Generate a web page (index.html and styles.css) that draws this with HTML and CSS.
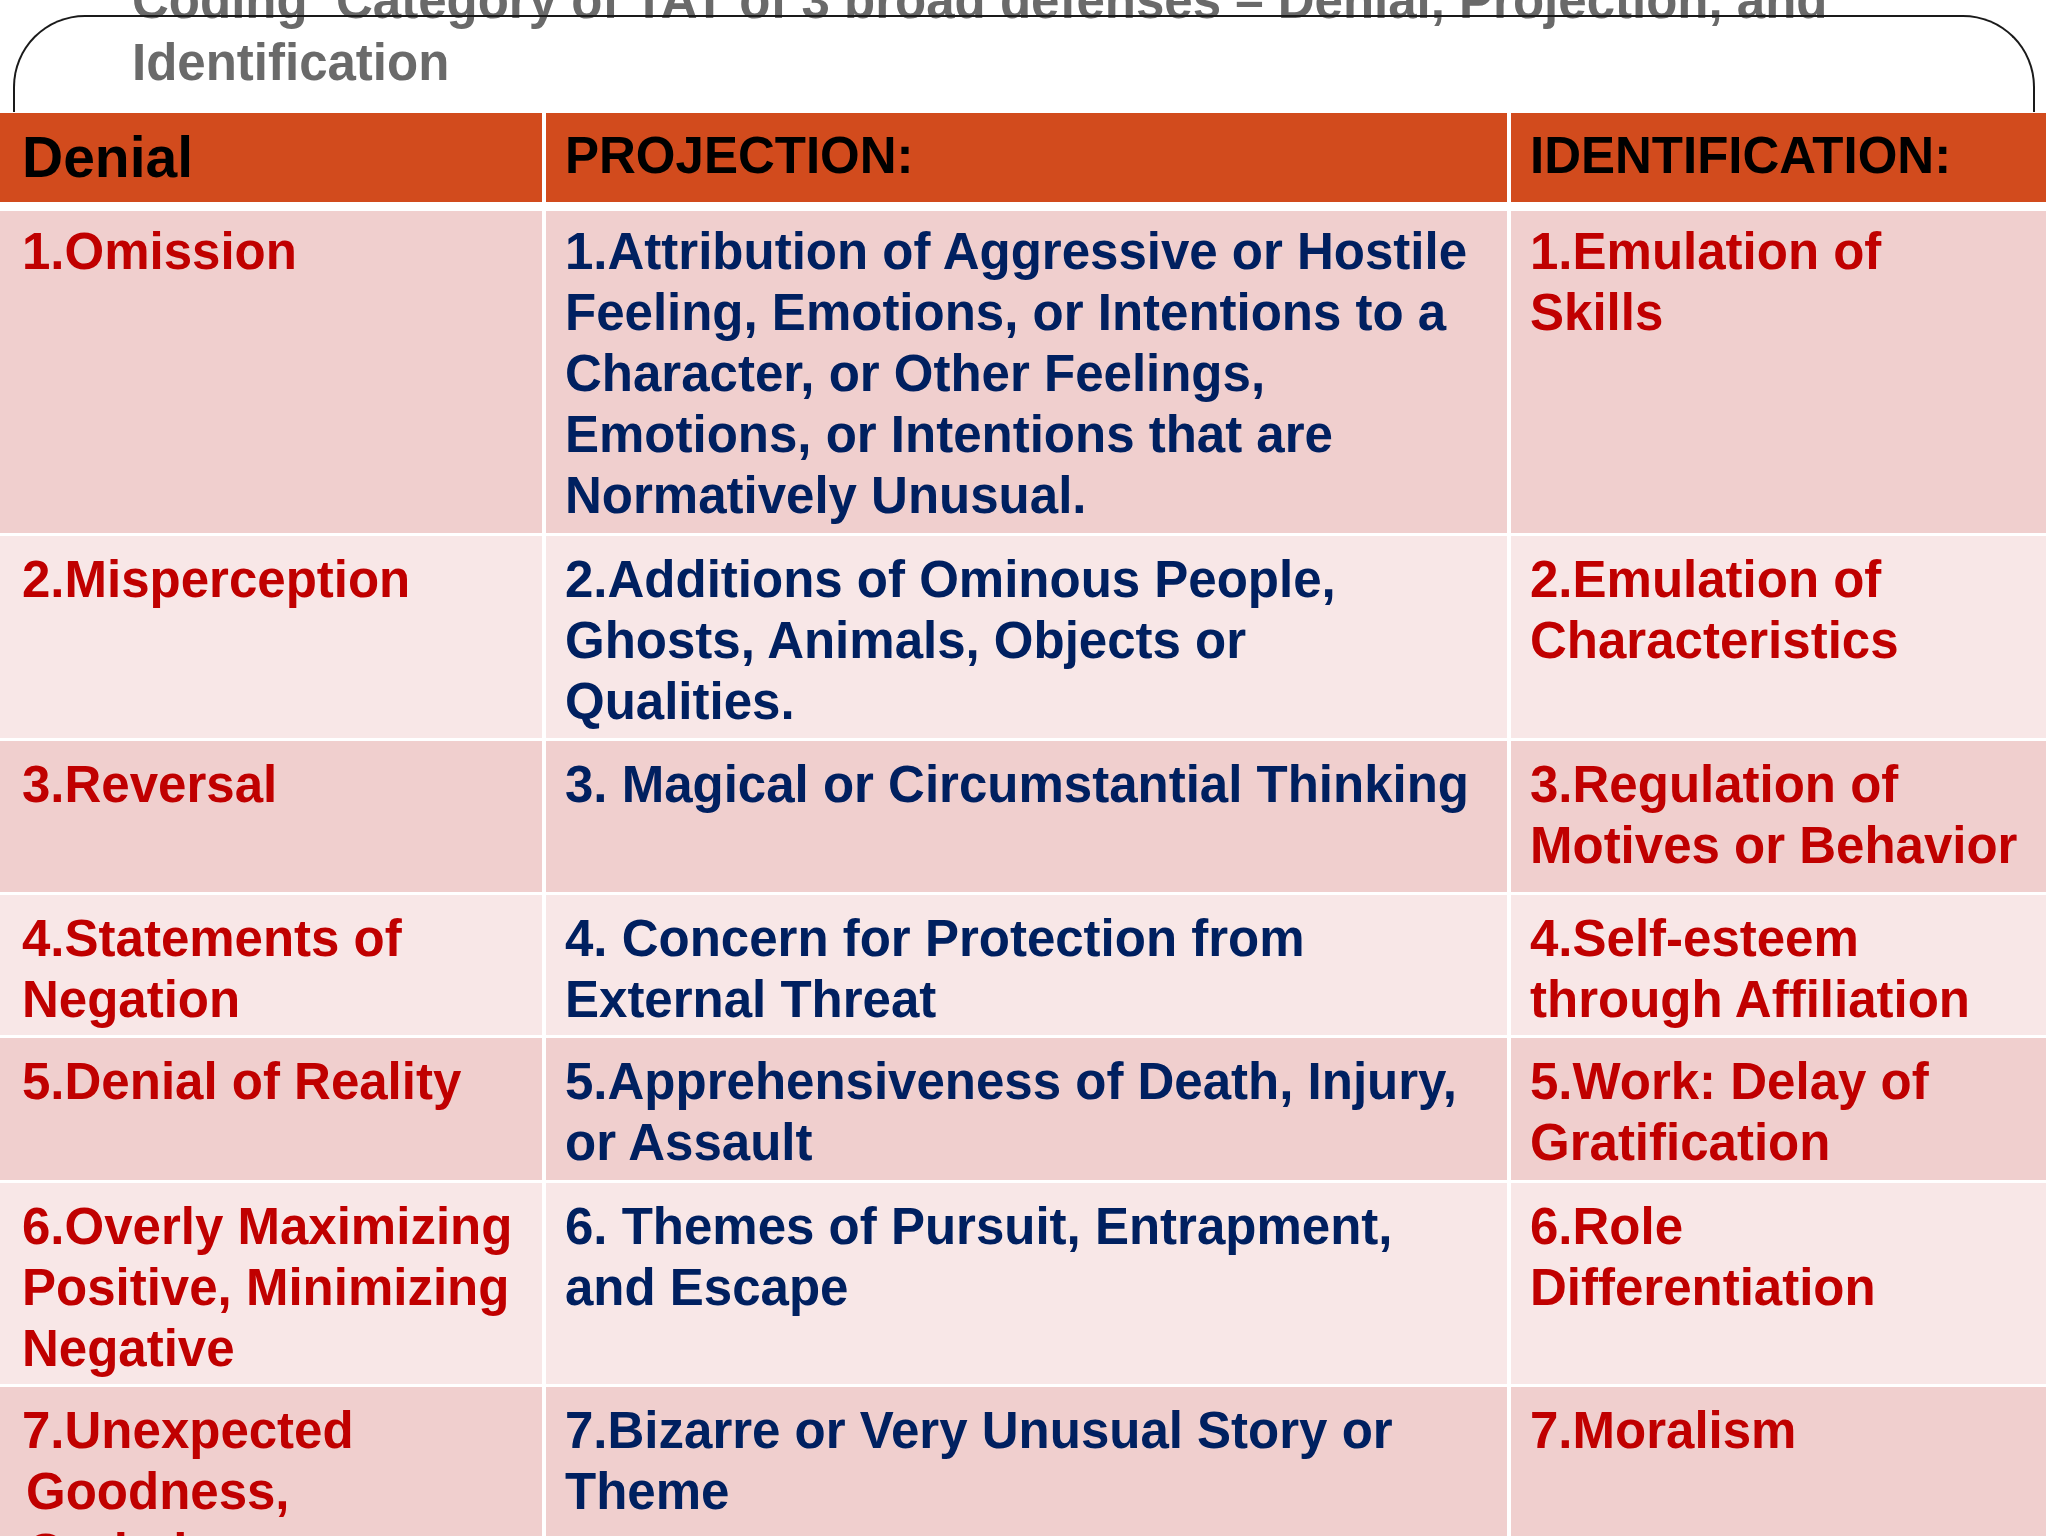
FILE: index.html
```html
<!DOCTYPE html>
<html lang="en">
<head>
<meta charset="utf-8">
<title>Coding Category of TAT</title>
<link rel="stylesheet" href="styles.css">
</head>
<body>
<div class="slide">
  <div class="frame"></div>
  <h1 class="title">Coding&nbsp; Category of TAT of 3 broad defenses – Denial, Projection, and<br>Identification</h1>
  <div class="table">
    <div class="th th-big c1">Denial</div>
    <div class="th">PROJECTION:</div>
    <div class="th">IDENTIFICATION:</div>

    <div class="td first odd red c1">1.Omission</div>
    <div class="td first odd blue">1.Attribution of Aggressive or Hostile<br>Feeling, Emotions, or Intentions to a<br>Character, or Other Feelings,<br>Emotions, or Intentions that are<br>Normatively Unusual.</div>
    <div class="td first odd red">1.Emulation of<br>Skills</div>

    <div class="td even red c1">2.Misperception</div>
    <div class="td even blue">2.Additions of Ominous People,<br>Ghosts, Animals, Objects or<br>Qualities.</div>
    <div class="td even red">2.Emulation of<br>Characteristics</div>

    <div class="td odd red c1">3.Reversal</div>
    <div class="td odd blue">3. Magical or Circumstantial Thinking</div>
    <div class="td odd red">3.Regulation of<br>Motives or Behavior</div>

    <div class="td even red c1">4.Statements of<br>Negation</div>
    <div class="td even blue">4. Concern for Protection from<br>External Threat</div>
    <div class="td even red">4.Self-esteem<br>through Affiliation</div>

    <div class="td odd red c1">5.Denial of Reality</div>
    <div class="td odd blue">5.Apprehensiveness of Death, Injury,<br>or Assault</div>
    <div class="td odd red">5.Work: Delay of<br>Gratification</div>

    <div class="td even red c1">6.Overly Maximizing<br>Positive, Minimizing<br>Negative</div>
    <div class="td even blue">6. Themes of Pursuit, Entrapment,<br>and Escape</div>
    <div class="td even red">6.Role<br>Differentiation</div>

    <div class="td odd red c1">7.Unexpected<br><span class="indent">Goodness,</span><br><span class="indent">Optimism</span></div>
    <div class="td odd blue">7.Bizarre or Very Unusual Story or<br>Theme</div>
    <div class="td odd red">7.Moralism</div>
  </div>
</div>
</body>
</html>
```
FILE: styles.css
```css
html, body {
  margin: 0;
  padding: 0;
  background: #ffffff;
}

body {
  width: 2048px;
  height: 1536px;
  overflow: hidden;
  font-family: "Liberation Sans", Arial, sans-serif;
}

.slide {
  position: relative;
  width: 2048px;
  height: 1536px;
  overflow: hidden;
}

.frame {
  position: absolute;
  left: 13px;
  top: 15px;
  width: 2018px;
  height: 95px;
  border: 2px solid #1a1a1a;
  border-bottom: none;
  border-radius: 72px 72px 0 0;
  z-index: 2;
  pointer-events: none;
}

.title {
  margin: -30px 0 19px 132px;
  font-size: 51px;
  line-height: 62px;
  font-weight: bold;
  color: #6a6a6a;
  white-space: nowrap;
}

.table {
  display: grid;
  grid-template-columns: 542px 961px 535px;
  grid-template-rows: 95px 322px 202px 151px 140px 142px 201px 170px;
  column-gap: 4px;
  row-gap: 3px;
}

.th {
  background: #d24b1d;
  border-bottom: 6px solid #ffffff;
  color: #000000;
  font-size: 51px;
  line-height: 61px;
  font-weight: bold;
  padding: 12px 18px 0 19px;
  white-space: nowrap;
}

.th-big {
  font-size: 57px;
  padding-top: 14px;
}

.td {
  font-size: 51px;
  line-height: 61px;
  font-weight: bold;
  padding: 13px 18px 0 19px;
  white-space: nowrap;
}

.td.first {
  padding-top: 10px;
}

.th.c1,
.td.c1 {
  padding-left: 22px;
}

.odd {
  background: #f0cfce;
}

.even {
  background: #f8e7e7;
}

.red {
  color: #c00000;
}

.blue {
  color: #002060;
}

.indent {
  padding-left: 4px;
}
```
